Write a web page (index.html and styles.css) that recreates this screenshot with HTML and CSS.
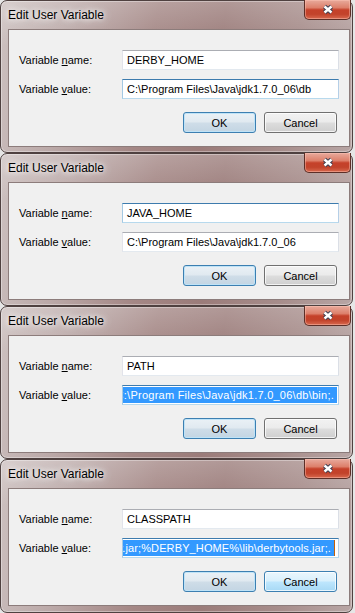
FILE: index.html
```html
<!DOCTYPE html>
<html lang="en">
<head>
    <meta charset="UTF-8">
    <title>Edit User Variable</title>
    <link rel="stylesheet" href="styles.css">
</head>
<body>
    <div class="dialog">
        <div class="titlebar">
            <span class="title">Edit User Variable</span>
            <div class="close">
                <svg width="14" height="11" viewBox="0 0 14 11"><path d="M3.5 2.5 L10.5 8.5 M10.5 2.5 L3.5 8.5" stroke="#3c3f52" stroke-width="4.4"/><path d="M3.5 2.5 L10.5 8.5 M10.5 2.5 L3.5 8.5" stroke="#fff" stroke-width="2.4"/></svg>
            </div>
        </div>
        <div class="panel">
            <div class="row"><label>Variable <u>n</u>ame:</label><div class="field">DERBY_HOME</div></div>
            <div class="row"><label>Variable <u>v</u>alue:</label><div class="field focus">C:\Program Files\Java\jdk1.7.0_06\db</div></div>
            <div class="buttons"><button class="btn default">OK</button><button class="btn">Cancel</button></div>
        </div>
    </div>

    <div class="dialog">
        <div class="titlebar">
            <span class="title">Edit User Variable</span>
            <div class="close">
                <svg width="14" height="11" viewBox="0 0 14 11"><path d="M3.5 2.5 L10.5 8.5 M10.5 2.5 L3.5 8.5" stroke="#3c3f52" stroke-width="4.4"/><path d="M3.5 2.5 L10.5 8.5 M10.5 2.5 L3.5 8.5" stroke="#fff" stroke-width="2.4"/></svg>
            </div>
        </div>
        <div class="panel">
            <div class="row"><label>Variable <u>n</u>ame:</label><div class="field focus">JAVA_HOME</div></div>
            <div class="row"><label>Variable <u>v</u>alue:</label><div class="field">C:\Program Files\Java\jdk1.7.0_06</div></div>
            <div class="buttons"><button class="btn default">OK</button><button class="btn">Cancel</button></div>
        </div>
    </div>

    <div class="dialog">
        <div class="titlebar">
            <span class="title">Edit User Variable</span>
            <div class="close">
                <svg width="14" height="11" viewBox="0 0 14 11"><path d="M3.5 2.5 L10.5 8.5 M10.5 2.5 L3.5 8.5" stroke="#3c3f52" stroke-width="4.4"/><path d="M3.5 2.5 L10.5 8.5 M10.5 2.5 L3.5 8.5" stroke="#fff" stroke-width="2.4"/></svg>
            </div>
        </div>
        <div class="panel">
            <div class="row"><label>Variable <u>n</u>ame:</label><div class="field">PATH</div></div>
            <div class="row"><label>Variable <u>v</u>alue:</label><div class="field focus scrolled"><span class="selected wide">C:\Program Files\Java\jdk1.7.0_06\db\bin;.</span></div></div>
            <div class="buttons"><button class="btn default">OK</button><button class="btn">Cancel</button></div>
        </div>
    </div>

    <div class="dialog last">
        <div class="titlebar">
            <span class="title">Edit User Variable</span>
            <div class="close">
                <svg width="14" height="11" viewBox="0 0 14 11"><path d="M3.5 2.5 L10.5 8.5 M10.5 2.5 L3.5 8.5" stroke="#3c3f52" stroke-width="4.4"/><path d="M3.5 2.5 L10.5 8.5 M10.5 2.5 L3.5 8.5" stroke="#fff" stroke-width="2.4"/></svg>
            </div>
        </div>
        <div class="panel">
            <div class="row"><label>Variable <u>n</u>ame:</label><div class="field">CLASSPATH</div></div>
            <div class="row"><label>Variable <u>v</u>alue:</label><div class="field focus scrolled"><span class="selected narrow">y.jar;%DERBY_HOME%\lib\derbytools.jar;.</span><span class="caret"></span></div></div>
            <div class="buttons"><button class="btn default">OK</button><button class="btn hover">Cancel</button></div>
        </div>
    </div>
</body>
</html>
```

FILE: styles.css
```css
body {
    margin: 0;
    width: 355px;
    height: 613px;
    overflow: hidden;
    background: #e6e6e6;
    font-family: "Liberation Sans", Arial, sans-serif;
    font-size: 11px;
    color: #000;
}

/* window frame (aero glass) */
.dialog {
    width: 353px;
    height: 153px;
    box-sizing: border-box;
    border: 1px solid #4f4140;
    border-radius: 7px;
    background:
        linear-gradient(180deg, rgba(255, 255, 255, 0.22) 0%, rgba(255, 255, 255, 0) 30%),
        linear-gradient(100deg, #cdc1c0 0%, #bba9a8 20%, #a48785 42%, #9b7c7a 60%, #a68c8a 80%, #b8a6a5 100%);
    box-shadow: inset 0 0 0 1px rgba(255, 255, 255, 0.35);
    display: flex;
    flex-direction: column;
}

.dialog.last {
    height: 154px;
}

.titlebar {
    height: 28px;
    display: flex;
    align-items: flex-start;
}

.title {
    margin: 7px 0 0 7px;
    font-size: 12px;
    line-height: 15px;
    text-shadow: 0 0 5px #fff, 0 0 9px rgba(255, 255, 255, 0.8), 0 0 14px rgba(255, 255, 255, 0.6);
}

.close {
    margin: -1px 1px 0 auto;
    width: 47px;
    height: 20px;
    box-sizing: border-box;
    border: 1px solid #5c2e27;
    border-top: none;
    border-radius: 0 0 5px 5px;
    background: linear-gradient(180deg, #e8aa9c 0%, #dd806b 40%, #c5412a 52%, #c2432b 75%, #d8694f 100%);
    box-shadow: inset 0 0 0 1px rgba(255, 200, 185, 0.45);
    display: flex;
    align-items: center;
    justify-content: center;
}

/* client area */
.panel {
    width: 342px;
    height: 118px;
    margin-left: 7px;
    box-sizing: border-box;
    border: 1px solid #8c7c7b;
    background: #f0f0f0;
    padding: 20px 10px 0 10px;
}

.row {
    display: flex;
    align-items: center;
    height: 20px;
    margin-bottom: 9px;
}

label {
    width: 103px;
}

.field {
    width: 217px;
    height: 20px;
    box-sizing: border-box;
    padding: 0 4px;
    background: #fff;
    border: 1px solid;
    border-color: #abadb3 #dbdfe6 #e3e9ef #e2e3ea;
    display: flex;
    align-items: center;
    white-space: nowrap;
    overflow: hidden;
}

.field.focus {
    border-color: #3d7bad #b5cfe7 #b7d9ed #a4c9e3;
}

.field.scrolled {
    padding: 1px 1px 1px 0;
    justify-content: flex-end;
}

.selected {
    flex-shrink: 0;
    align-self: stretch;
    display: flex;
    align-items: center;
    padding-right: 3px;
    background: #3399ff;
    color: #fff;
}

.selected.wide {
    letter-spacing: 0.25px;
}

.selected.narrow {
    letter-spacing: 0.12px;
}

.caret {
    flex-shrink: 0;
    width: 1px;
    align-self: stretch;
    margin-right: 2px;
    background: #c0600c;
}

.buttons {
    display: flex;
    justify-content: flex-end;
    gap: 8px;
    margin-top: 13px;
    margin-right: 2px;
}

.btn {
    width: 73px;
    height: 21px;
    padding: 0;
    border: 1px solid #707070;
    border-radius: 3px;
    background: linear-gradient(180deg, #f2f2f2 0%, #ebebeb 48%, #dddddd 52%, #cfcfcf 100%);
    box-shadow: inset 0 0 0 1px rgba(255, 255, 255, 0.75);
    font-family: inherit;
    font-size: 11px;
    color: #000;
}

.btn.default {
    border-color: #3c7fb1;
    background: linear-gradient(180deg, #eaf1f6 0%, #e0e9f0 48%, #cfdde8 52%, #c3d5e3 100%);
    box-shadow: inset 0 0 0 1px #bfe3f7;
}

.btn.hover {
    border-color: #3c7fb1;
    background: linear-gradient(180deg, #eaf6fd 0%, #d9f0fc 48%, #bee6fd 52%, #a7d9f5 100%);
}
```
